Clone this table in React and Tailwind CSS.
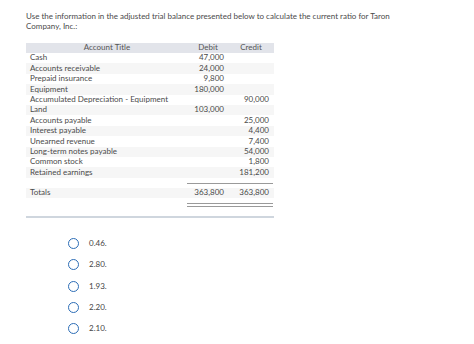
const rows = [
  ["Cash", "47,000", ""],
  ["Accounts receivable", "24,000", ""],
  ["Prepaid insurance", "9,800", ""],
  ["Equipment", "180,000", ""],
  ["Accumulated Depreciation - Equipment", "", "90,000"],
  ["Land", "103,000", ""],
  ["Accounts payable", "", "25,000"],
  ["Interest payable", "", "4,400"],
  ["Unearned revenue", "", "7,400"],
  ["Long-term notes payable", "", "54,000"],
  ["Common stock", "", "1,800"],
  ["Retained earnings", "", "181,200"],
];

const options = ["0.46.", "2.80.", "1.93.", "2.20.", "2.10."];

export default function App() {
  return (
    <div className="min-h-screen bg-white pl-[26px] pt-[12px] text-[8px] leading-[9.5px] text-[#4a4a4a] font-['Lato','Open_Sans',sans-serif]">
      <p className="w-[380px]">
        Use the information in the adjusted trial balance presented below to calculate the current ratio for Taron
        Company, Inc.:
      </p>

      <div className="mt-[12px] w-[248px]">
        <div className="flex h-[10px] items-center bg-[#e2e4ea] text-[#555]">
          <div className="w-[162px] text-center">Account Title</div>
          <div className="w-[40px] text-center">Debit</div>
          <div className="w-[46px] text-center">Credit</div>
        </div>
        {rows.map((r, i) => (
          <div
            key={r[0]}
            className={`flex h-[10.4px] items-center ${i % 2 ? "bg-[#f6f6f6]" : "bg-white"}`}
          >
            <div className="w-[162px] pl-[4px]">{r[0]}</div>
            <div className="w-[36px] text-right">{r[1]}</div>
            <div className="w-[45px] text-right">{r[2]}</div>
          </div>
        ))}

        <div className="ml-[161px] mt-[5px] h-px w-[86px] bg-[#9a9a9a]" />
        <div className="mt-[4px] flex h-[10px] items-center bg-[#f6f6f6]">
          <div className="w-[162px] pl-[4px]">Totals</div>
          <div className="w-[36px] text-right">363,800</div>
          <div className="w-[45px] text-right">363,800</div>
        </div>
        <div className="ml-[161px] mt-[5px] h-px w-[86px] bg-[#9a9a9a]" />
        <div className="ml-[161px] mt-[2px] h-px w-[86px] bg-[#9a9a9a]" />
      </div>

      <div className="mt-[9px] h-[2px] w-[248px] bg-[#cfd6de]" />

      <div className="mt-[21px] flex flex-col gap-[11.3px] pl-[42px]">
        {options.map((o) => (
          <label key={o} className="flex h-[10px] items-center gap-[10px]">
            <span className="h-[11px] w-[11px] rounded-full border-[1.5px] border-[#2c6db6]" />
            <span className="text-[#444]">{o}</span>
          </label>
        ))}
      </div>
    </div>
  );
}
